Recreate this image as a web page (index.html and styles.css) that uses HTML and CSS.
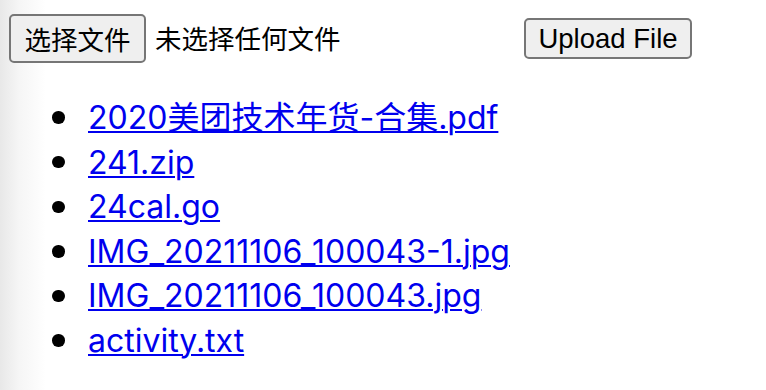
FILE: index.html
```html
<!DOCTYPE html>
<html lang="zh">
<head>
<meta charset="utf-8">
<title>Upload</title>
<link rel="stylesheet" href="styles.css">
</head>
<body>
<form class="upload-row">
  <span class="file-input">
    <span class="btn btn-choose">选择文件</span>
    <span class="file-status">未选择任何文件</span>
  </span>
  <button type="button" class="btn btn-upload">Upload File</button>
</form>
<ul class="file-list">
  <li><a href="#">2020美团技术年货-合集.pdf</a></li>
  <li><a href="#">241.zip</a></li>
  <li><a href="#">24cal.go</a></li>
  <li><a href="#">IMG_20211106_100043-1.jpg</a></li>
  <li><a href="#">IMG_20211106_100043.jpg</a></li>
  <li><a href="#">activity.txt</a></li>
</ul>
</body>
</html>
```

FILE: styles.css
```css
html {
  background: linear-gradient(to right, #e8e8e8 0px, #f6f6f6 20px, #ffffff 46px);
  min-height: 100%;
}
body {
  margin: 0;
  padding: 14px 0 0 9px;
  font-family: "Noto Sans CJK SC", sans-serif;
  color: #000;
}
.upload-row {
  display: flex;
  align-items: center;
  margin: 0;
}
.file-input {
  display: flex;
  align-items: center;
  width: 515px;
}
.btn {
  box-sizing: border-box;
  display: inline-flex;
  align-items: center;
  justify-content: center;
  background: #efefef;
  border: 2px solid #767676;
  border-radius: 5px;
  color: #000;
  padding: 0;
  margin: 0;
}
.btn-choose {
  width: 137px;
  height: 49px;
  font-family: "Noto Sans CJK SC", sans-serif;
  font-size: 26.5px;
}
.file-status {
  margin-left: 9px;
  font-size: 26.5px;
  line-height: 1;
}
.btn-upload {
  width: 168px;
  height: 41px;
  font-family: "Liberation Sans", Arial, sans-serif;
  font-size: 27.5px;
}
.file-list {
  margin: 33px 0 0 0;
  padding-left: 79px;
  list-style: none;
  font-size: 32px;
  line-height: 44.6px;
  font-family: Inter, "Noto Sans CJK SC", sans-serif;
}
.file-list li::before {
  content: "";
  display: inline-block;
  width: 12.5px;
  height: 12.5px;
  border-radius: 50%;
  background: #000;
  margin-left: -36px;
  margin-right: 23.5px;
  vertical-align: 0.16em;
}
.file-list a {
  color: #0000ee;
  text-decoration: underline;
  text-decoration-thickness: 2px;
  text-underline-offset: 2px;
}
```
